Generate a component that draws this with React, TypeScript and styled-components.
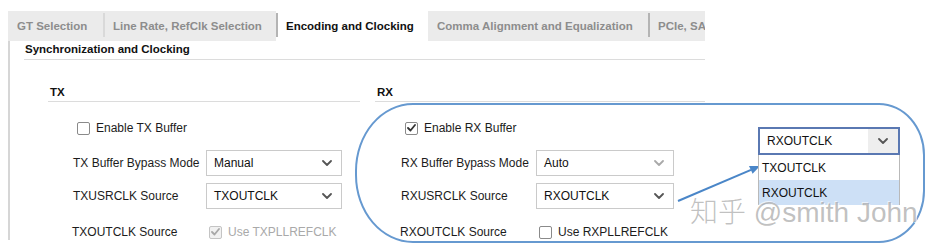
import React from 'react';
import styled, { createGlobalStyle } from 'styled-components';

const GlobalStyle = createGlobalStyle`
  html, body { margin: 0; padding: 0; background: #fff; }
  body { font-family: "Liberation Sans", Arial, sans-serif; color: #1c1c1c; }
`;

const Page = styled.div`
  position: relative;
  width: 942px;
  height: 250px;
  overflow: hidden;
  background: #fff;
  padding-top: 11px;
  box-sizing: border-box;
`;

const Window = styled.div`
  margin-left: 8px;
  width: 697px;
`;

const TabBar = styled.div`
  display: flex;
  height: 30px;
`;

type Sep = 'none' | 'light' | 'dark';

const Tab = styled.div<{ $w: number; $active?: boolean; $sep: Sep }>`
  position: relative;
  box-sizing: border-box;
  flex: none;
  width: ${(p) => p.$w}px;
  display: flex;
  align-items: center;
  padding-left: ${(p) => (p.$sep === 'none' ? 9 : 10)}px;
  font-size: 11.5px;
  font-weight: bold;
  white-space: nowrap;
  overflow: hidden;
  background: ${(p) => (p.$active ? '#fff' : '#ebebeb')};
  color: ${(p) => (p.$active ? '#111' : '#8d8d8d')};

  &::before {
    content: '';
    display: ${(p) => (p.$sep === 'none' ? 'none' : 'block')};
    position: absolute;
    left: 0;
    top: 2px;
    bottom: 4px;
    width: 2px;
    background: ${(p) => (p.$sep === 'dark' ? '#b4b4b4' : '#d9d9d9')};
  }
`;

const Panel = styled.div`
  border-left: 2px solid #d6d6d6;
  padding: 1px 0 0 14px;
  height: 199px;
  box-sizing: border-box;
`;

const SectionTitle = styled.div`
  font-size: 11.5px;
  font-weight: bold;
  line-height: 14px;
  padding: 0 0 3px 1px;
  border-bottom: 1px solid #dcdcdc;
  color: #111;
`;

const Columns = styled.div`
  display: grid;
  grid-template-columns: 312px 330px;
  column-gap: 15px;
  margin: 25px 0 0 24px;
`;

const Column = styled.div`
  display: flex;
  flex-direction: column;
`;

const GroupHeader = styled.div`
  font-size: 11.5px;
  font-weight: bold;
  line-height: 14px;
  padding: 0 0 2px 2px;
  border-bottom: 1px solid #dcdcdc;
  color: #111;
`;

const CheckRow = styled.div<{ $indent: number }>`
  display: flex;
  align-items: center;
  gap: 6px;
  height: 20px;
  margin-top: 16px;
  padding-left: ${(p) => p.$indent}px;
  font-size: 12px;
`;

const FormRow = styled.div<{ $top: number; $indent: number }>`
  display: flex;
  align-items: center;
  height: 26px;
  margin-top: ${(p) => p.$top}px;
  padding-left: ${(p) => p.$indent}px;
`;

const Label = styled.div<{ $w: number }>`
  flex: none;
  width: ${(p) => p.$w}px;
  font-size: 12px;
  white-space: nowrap;
`;

const SelectBox = styled.div<{ $w: number }>`
  box-sizing: border-box;
  width: ${(p) => p.$w}px;
  height: 26px;
  border: 1px solid #cacaca;
  background: #fff;
  display: flex;
  align-items: center;
  justify-content: space-between;
  padding: 0 9px 0 7px;
  font-size: 12px;
  color: #111;
`;

const OptionCheck = styled.div<{ $indent: number; $disabled?: boolean }>`
  display: flex;
  align-items: center;
  gap: 6px;
  padding-left: ${(p) => p.$indent}px;
  font-size: 12px;
  color: ${(p) => (p.$disabled ? '#a9a9a9' : '#1c1c1c')};
`;

const Box = styled.span<{ $disabled?: boolean }>`
  box-sizing: border-box;
  width: 13px;
  height: 13px;
  border: 1px solid ${(p) => (p.$disabled ? '#c4c4c4' : '#8a8a8a')};
  border-radius: 2px;
  background: ${(p) => (p.$disabled ? '#f1f1f1' : '#fff')};
  display: inline-flex;
  align-items: center;
  justify-content: center;
  flex: none;
`;

const Chevron = ({ color = '#555' }: { color?: string }) => (
  <svg width="10" height="6" viewBox="0 0 10 6">
    <polyline points="1,1 5,5 9,1" fill="none" stroke={color} strokeWidth="1.8" strokeLinejoin="round" strokeLinecap="round" />
  </svg>
);

const Checkbox = ({ checked, disabled }: { checked?: boolean; disabled?: boolean }) => (
  <Box $disabled={disabled}>
    {checked && (
      <svg width="9" height="8" viewBox="0 0 9 8">
        <polyline points="1,4 3.5,6.5 8,1" fill="none" stroke={disabled ? '#a8a8a8' : '#333'} strokeWidth="1.8" strokeLinejoin="round" strokeLinecap="round" />
      </svg>
    )}
  </Box>
);

/* ---- Annotation overlays ---- */

const CalloutRing = styled.div`
  position: absolute;
  left: 355px;
  top: 103px;
  width: 570px;
  height: 140px;
  box-sizing: border-box;
  border: 2px solid #6699d0;
  border-radius: 58px 46px 46px 58px / 68px 52px 52px 68px;
  pointer-events: none;
`;

const ArrowSvg = styled.svg`
  position: absolute;
  left: 670px;
  top: 155px;
`;

const Dropdown = styled.div`
  position: absolute;
  left: 758px;
  top: 127px;
  width: 142px;
`;

const DropSelect = styled.div`
  box-sizing: border-box;
  height: 28px;
  border: 2px solid #5a78b2;
  background: #fff;
  display: flex;
  align-items: stretch;
  font-size: 12px;
  color: #111;
`;

const DropValue = styled.div`
  flex: 1;
  display: flex;
  align-items: center;
  padding-left: 7px;
`;

const DropButton = styled.div`
  width: 30px;
  background: #eeeeee;
  display: flex;
  align-items: center;
  justify-content: center;
`;

const DropList = styled.div`
  border-left: 1px solid #b9b9b9;
  border-right: 1px solid #b9b9b9;
  background: #fff;
`;

const DropItem = styled.div<{ $selected?: boolean }>`
  height: 25px;
  display: flex;
  align-items: center;
  padding-left: 3px;
  font-size: 12px;
  color: #111;
  background: ${(p) => (p.$selected ? '#cde0f6' : '#fff')};
`;

const Watermark = styled.div`
  position: absolute;
  left: 690px;
  top: 196px;
  font-family: "Liberation Sans", "Noto Sans CJK SC", sans-serif;
  font-size: 28px;
  line-height: 28px;
  white-space: nowrap;
  color: rgba(140, 140, 140, 0.55);
  text-shadow: 1px 1px 0 rgba(255, 255, 255, 0.8), -1px -1px 0 rgba(255, 255, 255, 0.6);
  pointer-events: none;
`;

const CJK = styled.span`
  font-family: "Noto Sans CJK SC", sans-serif;
  font-weight: 300;
`;

export default function App() {
  return (
    <>
      <GlobalStyle />
      <Page>
        <Window>
          <TabBar>
            <Tab $w={95} $sep="none">GT Selection</Tab>
            <Tab $w={173} $sep="light">Line Rate, RefClk Selection</Tab>
            <Tab $w={152} $sep="dark" $active>Encoding and Clocking</Tab>
            <Tab $w={220} $sep="none">Comma Alignment and Equalization</Tab>
            <Tab $w={57} $sep="dark">PCIe, SA</Tab>
          </TabBar>
          <Panel>
            <SectionTitle>Synchronization and Clocking</SectionTitle>
            <Columns>
              <Column>
                <GroupHeader>TX</GroupHeader>
                <CheckRow $indent={29}>
                  <Checkbox />
                  Enable TX Buffer
                </CheckRow>
                <FormRow $top={12} $indent={25}>
                  <Label $w={133}>TX Buffer Bypass Mode</Label>
                  <SelectBox $w={136}>
                    Manual
                    <Chevron />
                  </SelectBox>
                </FormRow>
                <FormRow $top={7} $indent={25}>
                  <Label $w={133}>TXUSRCLK Source</Label>
                  <SelectBox $w={136}>
                    TXOUTCLK
                    <Chevron />
                  </SelectBox>
                </FormRow>
                <FormRow $top={10} $indent={24}>
                  <Label $w={134}>TXOUTCLK Source</Label>
                  <OptionCheck $indent={3} $disabled>
                    <Checkbox checked disabled />
                    Use TXPLLREFCLK
                  </OptionCheck>
                </FormRow>
              </Column>
              <Column>
                <GroupHeader>RX</GroupHeader>
                <CheckRow $indent={30}>
                  <Checkbox checked />
                  Enable RX Buffer
                </CheckRow>
                <FormRow $top={12} $indent={26}>
                  <Label $w={135}>RX Buffer Bypass Mode</Label>
                  <SelectBox $w={138}>
                    Auto
                    <Chevron color="#a9a9a9" />
                  </SelectBox>
                </FormRow>
                <FormRow $top={7} $indent={26}>
                  <Label $w={135}>RXUSRCLK Source</Label>
                  <SelectBox $w={138}>
                    RXOUTCLK
                    <Chevron />
                  </SelectBox>
                </FormRow>
                <FormRow $top={10} $indent={25}>
                  <Label $w={136}>RXOUTCLK Source</Label>
                  <OptionCheck $indent={3}>
                    <Checkbox />
                    Use RXPLLREFCLK
                  </OptionCheck>
                </FormRow>
              </Column>
            </Columns>
          </Panel>
        </Window>

        <CalloutRing />
        <ArrowSvg width="100" height="55" viewBox="0 0 100 55">
          <line x1="8" y1="46" x2="81" y2="14.9" stroke="#4a86c8" strokeWidth="2" />
          <polygon points="90,11 82.6,18.8 79,11" fill="#4a86c8" />
        </ArrowSvg>
        <Dropdown>
          <DropSelect>
            <DropValue>RXOUTCLK</DropValue>
            <DropButton>
              <Chevron />
            </DropButton>
          </DropSelect>
          <DropList>
            <DropItem>TXOUTCLK</DropItem>
            <DropItem $selected>RXOUTCLK</DropItem>
          </DropList>
        </Dropdown>
        <Watermark>
          <CJK>知乎</CJK> @smith John
        </Watermark>
      </Page>
    </>
  );
}
